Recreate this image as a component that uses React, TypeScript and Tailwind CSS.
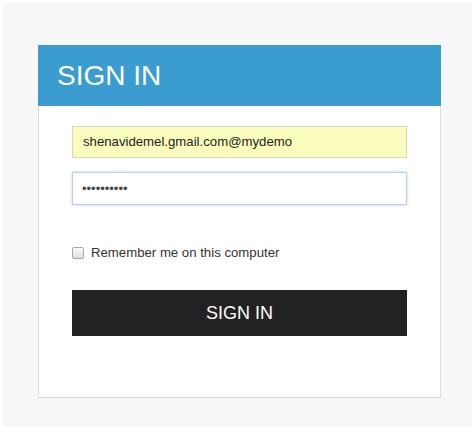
import React from "react";

export default function App() {
  return (
    <div
      className="w-[474px] h-[431px] bg-white pt-[3px] pl-[3px] pr-[2px] pb-[4px]"
      style={{ fontFamily: '"Liberation Sans", Arial, sans-serif' }}
    >
      <div className="w-full h-full bg-[#f7f7f7] pt-[42px] pl-[35px]">
        <div className="w-[403px] h-[353px] bg-white border border-[#dcdcdc] flex flex-col">
          <div className="h-[61px] -mx-px -mt-px bg-[#3a9ccf] flex items-center pl-[19px] pt-[1px]">
            <span className="text-white text-[28px] leading-none">SIGN IN</span>
          </div>
          <div className="pl-[33px] pt-[20px] flex flex-col">
            <div className="w-[335px] h-[32px] bg-[#fafcbc] border border-[#d6d6c0] flex items-center pl-[10px] text-[13.2px] text-[#222]">
              shenavidemel.gmail.com@mydemo
            </div>
            <div className="mt-[14px] w-[335px] h-[33px] bg-white border border-[#b9cfe6] shadow-[0_0_3px_rgba(120,160,210,0.45)] flex items-center pl-[9px] text-[13px] text-[#444]">
              ••••••••••
            </div>
            <div className="mt-[41px] flex items-center h-[14px]">
              <div className="w-[12px] h-[12px] rounded-[2px] border border-[#a9a9a9] bg-gradient-to-b from-[#fafafa] to-[#dedede]" />
              <span className="ml-[7px] text-[13.2px] text-[#333]">Remember me on this computer</span>
            </div>
            <button className="mt-[30px] w-[335px] h-[46px] bg-[#222222] text-white text-[18px] flex items-center justify-center">
              SIGN IN
            </button>
          </div>
        </div>
      </div>
    </div>
  );
}
